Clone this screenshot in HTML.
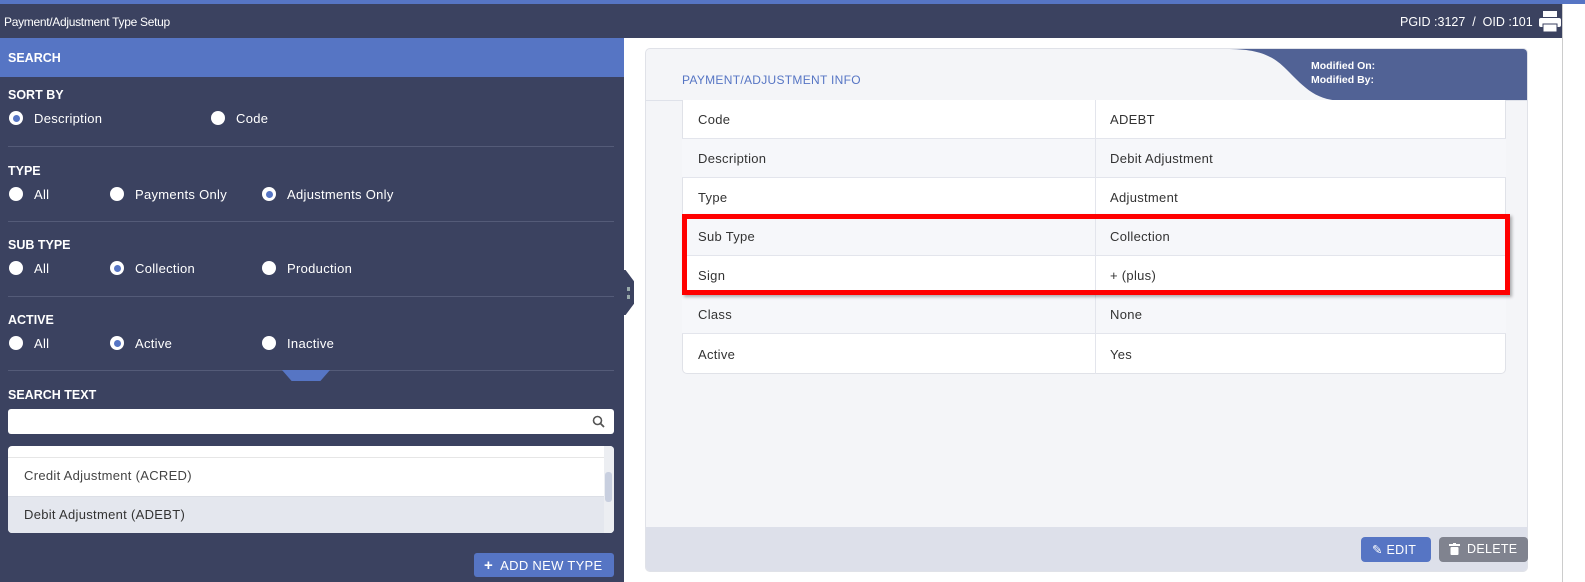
<!DOCTYPE html>
<html><head><meta charset="utf-8"><style>
*{margin:0;padding:0;box-sizing:border-box}
body{width:1585px;height:582px;overflow:hidden;background:#fff;font-family:"Liberation Sans",sans-serif;position:relative}
.a{position:absolute}
.t{font-size:13px;color:#fff;letter-spacing:.3px}
.lbl{font-size:12.5px;font-weight:bold;color:#fff}
.r{position:absolute;width:14px;height:14px;border-radius:50%;background:#fff}
.r.on::after{content:"";position:absolute;left:3.5px;top:3.5px;width:7px;height:7px;border-radius:50%;background:#5675c4}
.sep{position:absolute;left:8px;width:606px;height:1px;background:#545b78}
.row{position:absolute;left:682px;width:824px;height:39px;border-bottom:1px solid #e3e5ec;font-size:13px;color:#333;letter-spacing:.3px}
.row span{position:absolute;top:12px}
</style></head><body>
<div class="a" style="left:0;top:0;width:1585px;height:4px;background:#5675c4"></div>
<div class="a" style="left:0;top:4px;width:1562px;height:34px;background:#3b4260"></div>
<div class="a t" style="left:4px;top:15px;font-size:12px;letter-spacing:-0.3px">Payment/Adjustment Type Setup</div>
<div class="a t" style="left:1400px;top:15px;font-size:12.5px;letter-spacing:0">PGID :3127 &nbsp;/ &nbsp;OID :101</div>
<svg class="a" style="left:1538px;top:11px" width="24" height="22" viewBox="0 0 24 22"><rect x="5" y="0" width="14" height="6" fill="#fff"/><rect x="1" y="7" width="22" height="9" rx="2" fill="#fff"/><rect x="5" y="13" width="14" height="8" fill="#fff" stroke="#3b4260" stroke-width="1"/></svg>
<div class="a" style="left:1562px;top:4px;width:1px;height:578px;background:#ccc"></div>
<div class="a" style="left:0;top:38px;width:624px;height:544px;background:#3b4260"></div>
<div class="a" style="left:0;top:38px;width:624px;height:39px;background:#5675c4"></div>
<div class="a lbl" style="left:8px;top:51px">SEARCH</div>
<div class="a lbl" style="left:8px;top:88px">SORT BY</div>
<div class="r on" style="left:9px;top:111px"></div><div class="a t" style="left:34px;top:111px">Description</div>
<div class="r" style="left:211px;top:111px"></div><div class="a t" style="left:236px;top:111px">Code</div>
<div class="sep" style="top:146px"></div>
<div class="a lbl" style="left:8px;top:164px">TYPE</div>
<div class="r" style="left:9px;top:187px"></div><div class="a t" style="left:34px;top:187px">All</div>
<div class="r" style="left:110px;top:187px"></div><div class="a t" style="left:135px;top:187px">Payments Only</div>
<div class="r on" style="left:262px;top:187px"></div><div class="a t" style="left:287px;top:187px">Adjustments Only</div>
<div class="sep" style="top:221px"></div>
<div class="a lbl" style="left:8px;top:238px">SUB TYPE</div>
<div class="r" style="left:9px;top:261px"></div><div class="a t" style="left:34px;top:261px">All</div>
<div class="r on" style="left:110px;top:261px"></div><div class="a t" style="left:135px;top:261px">Collection</div>
<div class="r" style="left:262px;top:261px"></div><div class="a t" style="left:287px;top:261px">Production</div>
<div class="sep" style="top:296px"></div>
<div class="a lbl" style="left:8px;top:313px">ACTIVE</div>
<div class="r" style="left:9px;top:336px"></div><div class="a t" style="left:34px;top:336px">All</div>
<div class="r on" style="left:110px;top:336px"></div><div class="a t" style="left:135px;top:336px">Active</div>
<div class="r" style="left:262px;top:336px"></div><div class="a t" style="left:287px;top:336px">Inactive</div>
<div class="sep" style="top:370px"></div>
<div class="a" style="left:282px;top:370px;width:48px;height:11px;background:#5675c4;clip-path:polygon(0 0,100% 0,80% 100%,20% 100%)"></div>
<div class="a lbl" style="left:8px;top:388px">SEARCH TEXT</div>
<div class="a" style="left:8px;top:409px;width:606px;height:25px;background:#fff;border-radius:3px"></div>
<svg class="a" style="left:592px;top:415px" width="13" height="13" viewBox="0 0 13 13"><circle cx="5.5" cy="5.5" r="4" fill="none" stroke="#555" stroke-width="1.6"/><line x1="8.5" y1="8.5" x2="12" y2="12" stroke="#555" stroke-width="1.8"/></svg>
<div class="a" style="left:8px;top:446px;width:606px;height:87px;background:#fff;border-radius:4px;overflow:hidden">
<div class="a" style="left:0;top:11px;width:606px;height:1px;background:#e6e6e6"></div>
<div class="a" style="left:16px;top:22px;font-size:13px;color:#444;letter-spacing:.3px">Credit Adjustment (ACRED)</div>
<div class="a" style="left:0;top:50px;width:606px;height:37px;background:#e4e7ee;border-top:1px solid #dcdfe6"></div>
<div class="a" style="left:16px;top:61px;font-size:13px;color:#333;letter-spacing:.3px">Debit Adjustment (ADEBT)</div>
<div class="a" style="left:596px;top:0;width:10px;height:87px;background:#eceef2"></div>
<div class="a" style="left:597px;top:26px;width:7px;height:30px;background:#c8cfdf;border-radius:3px"></div>
</div>
<div class="a" style="left:474px;top:553px;width:140px;height:24px;background:#5675c4;border-radius:3px"></div>
<div class="a t" style="left:484px;top:557px;font-size:13px"><b style="font-size:15px">+</b>&nbsp; ADD NEW TYPE</div>
<div class="a" style="left:622px;top:270px;width:12px;height:45px;background:#3b4260;clip-path:polygon(0 0,30% 0,100% 25%,100% 75%,30% 100%,0 100%)"></div>
<div class="a" style="left:627px;top:287px;width:3px;height:12px;border-left:3px dotted #9aa"></div>
<div class="a" style="left:645px;top:48px;width:883px;height:524px;background:#f4f5f8;border:1px solid #e0e2e8;border-radius:5px;overflow:hidden">
<svg class="a" style="left:580px;top:0" width="303" height="52" viewBox="0 0 303 52"><path d="M0 0 H303 V52 H120 C90 52 80 40 60 20 C45 5 30 0 0 0Z" fill="#516295"/></svg>
<div class="a" style="left:0;top:51px;width:883px;height:1px;background:#dfe2ea"></div>
<div class="a" style="left:0;top:478px;width:883px;height:46px;background:#dde0ea"></div>
</div>
<div class="a" style="left:682px;top:73px;font-size:12px;color:#5675c4;letter-spacing:.3px">PAYMENT/ADJUSTMENT INFO</div>
<div class="a" style="left:1311px;top:59px;font-size:10.5px;font-weight:bold;color:#fff;line-height:14px">Modified On:<br>Modified By:</div>
<div class="a" style="left:682px;top:100px;width:824px;height:274px;background:#fff;border:1px solid #e0e2e8;border-top:none;border-radius:0 0 5px 5px"></div>
<div class="row" style="top:100px"><span style="left:16px">Code</span><span style="left:428px">ADEBT</span></div>
<div class="row" style="top:139px;background:#f6f7fa"><span style="left:16px">Description</span><span style="left:428px">Debit Adjustment</span></div>
<div class="row" style="top:178px"><span style="left:16px">Type</span><span style="left:428px">Adjustment</span></div>
<div class="row" style="top:217px;background:#f6f7fa"><span style="left:16px">Sub Type</span><span style="left:428px">Collection</span></div>
<div class="row" style="top:256px"><span style="left:16px">Sign</span><span style="left:428px">+ (plus)</span></div>
<div class="row" style="top:295px;background:#f6f7fa"><span style="left:16px">Class</span><span style="left:428px">None</span></div>
<div class="row" style="top:335px;border-bottom:none"><span style="left:16px">Active</span><span style="left:428px">Yes</span></div>
<div class="a" style="left:1095px;top:100px;width:1px;height:274px;background:#e3e5ec"></div>
<div class="a" style="left:682px;top:214px;width:828px;height:81px;border:5px solid #f00;box-shadow:2px 2px 3px rgba(0,0,0,.3)"></div>
<div class="a" style="left:1361px;top:537px;width:70px;height:25px;background:#5675c4;border-radius:4px"></div>
<div class="a t" style="left:1372px;top:542px;font-size:12.5px">&#9998; EDIT</div>
<div class="a" style="left:1439px;top:537px;width:89px;height:25px;background:#80838f;border-radius:4px"></div>
<svg class="a" style="left:1449px;top:543px" width="11" height="12" viewBox="0 0 11 12"><rect x="0" y="1" width="11" height="2" fill="#fff"/><rect x="4" y="0" width="3" height="2" fill="#fff"/><rect x="1.5" y="4" width="8" height="8" rx="1" fill="#fff"/></svg>
<div class="a t" style="left:1467px;top:542px;font-size:12.5px">DELETE</div>
</body></html>
